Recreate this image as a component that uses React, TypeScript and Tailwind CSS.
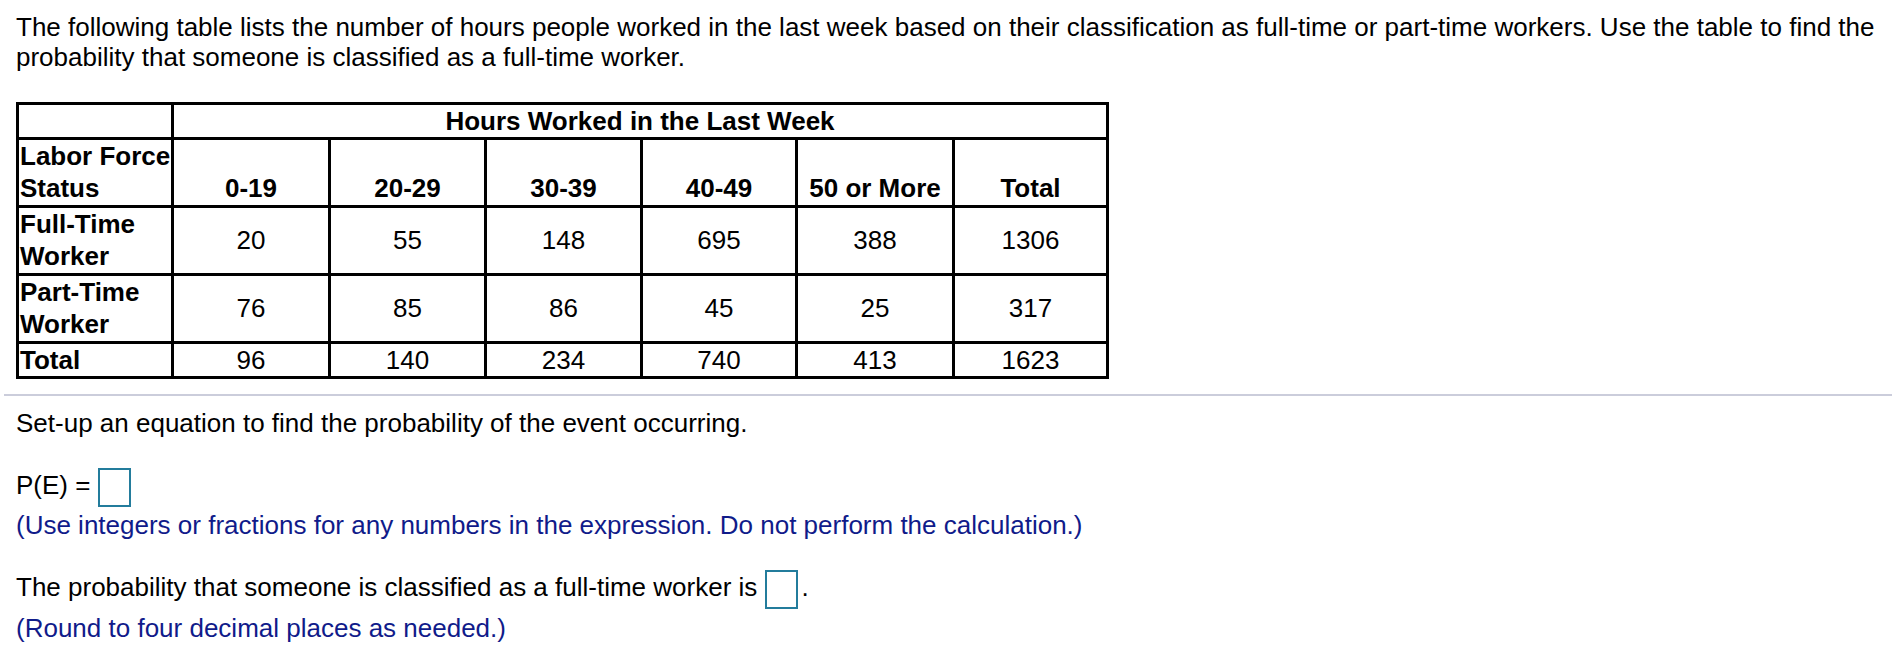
const hours = ['0-19', '20-29', '30-39', '40-49', '50 or More', 'Total'];

const rows = [
  { label: ['Full-Time', 'Worker'], values: ['20', '55', '148', '695', '388', '1306'] },
  { label: ['Part-Time', 'Worker'], values: ['76', '85', '86', '45', '25', '317'] },
];

const totals = ['96', '140', '234', '740', '413', '1623'];

function AnswerBox() {
  return <span className="inline-block align-middle w-[33px] h-[39px] border-2 border-[#237c9c] bg-white" />;
}

export default function App() {
  const cell = 'border-[3px] border-black px-px leading-[32px]';
  const tall = `${cell} pb-px`;
  const head = 'font-bold text-left whitespace-nowrap';

  return (
    <div className="min-h-screen bg-white text-black text-[26px] leading-[30px] pt-3 pl-4 pr-1 font-['Liberation_Sans',Arial,sans-serif]">
      <p>
        The following table lists the number of hours people worked in the last week based on their classification as
        full-time or part-time workers. Use the table to find the probability that someone is classified as a full-time
        worker.
      </p>

      <table className="mt-[30px] w-[1090px] table-fixed border-collapse">
        <colgroup>
          <col className="w-[155px]" />
          <col className="w-[157px]" />
          <col className="w-[156px]" />
          <col className="w-[156px]" />
          <col className="w-[155px]" />
          <col className="w-[157px]" />
          <col className="w-[154px]" />
        </colgroup>
        <tbody>
          <tr>
            <td className={cell} />
            <td colSpan={6} className={`${cell} text-center font-bold`}>
              Hours Worked in the Last Week
            </td>
          </tr>
          <tr>
            <td className={`${tall} ${head} align-bottom`}>
              Labor Force
              <br />
              Status
            </td>
            {hours.map((h) => (
              <td key={h} className={`${tall} font-bold text-center align-bottom whitespace-nowrap`}>
                {h}
              </td>
            ))}
          </tr>
          {rows.map((r) => (
            <tr key={r.label[0]}>
              <td className={`${tall} ${head}`}>
                {r.label[0]}
                <br />
                {r.label[1]}
              </td>
              {r.values.map((v, i) => (
                <td key={i} className={`${tall} text-center align-middle`}>
                  {v}
                </td>
              ))}
            </tr>
          ))}
          <tr>
            <td className={`${cell} ${head}`}>Total</td>
            {totals.map((v, i) => (
              <td key={i} className={`${cell} text-center`}>
                {v}
              </td>
            ))}
          </tr>
        </tbody>
      </table>

      <div className="mt-[15px] -ml-3 -mr-1 h-[2px] bg-[#cbcddb]" />

      <p className="mt-3">Set-up an equation to find the probability of the event occurring.</p>

      <div className="mt-[30px]">
        P(E) = <AnswerBox />
      </div>
      <p className="mt-[3px] text-[#101b8a]">
        (Use integers or fractions for any numbers in the expression. Do not perform the calculation.)
      </p>

      <div className="mt-[30px]">
        The probability that someone is classified as a full-time worker is <AnswerBox />
        <span className="ml-1">.</span>
      </div>
      <p className="mt-[4px] text-[#101b8a]">(Round to four decimal places as needed.)</p>
    </div>
  );
}
